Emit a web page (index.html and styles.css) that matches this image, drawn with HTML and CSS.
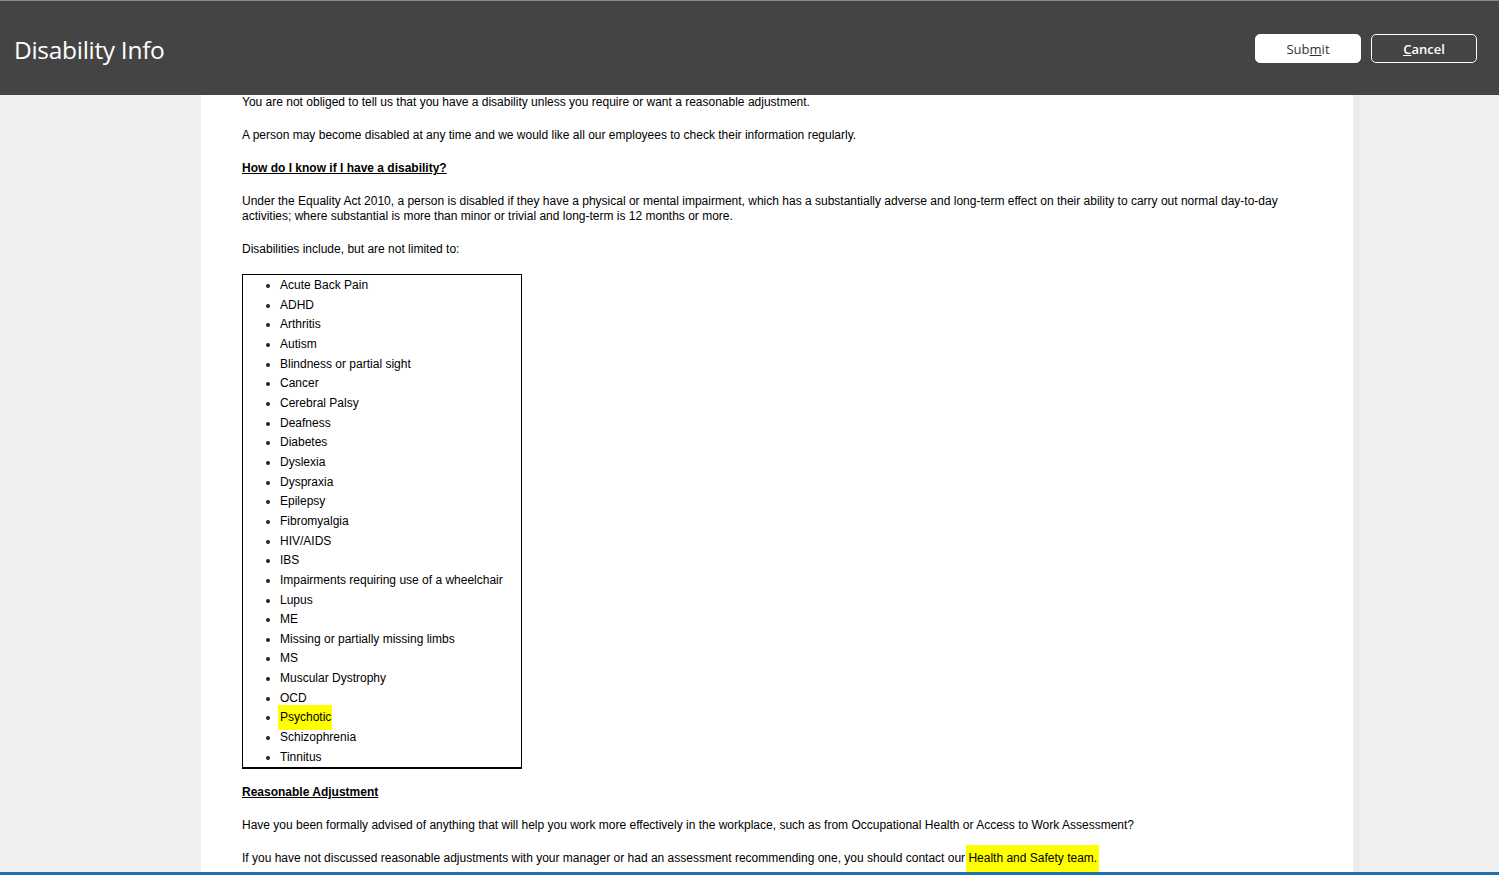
FILE: index.html
```html
<!DOCTYPE html>
<html>
<head>
<meta charset="utf-8">
<title>Disability Info</title>
<link rel="stylesheet" href="styles.css">
</head>
<body>
<div class="page">
  <header class="topbar">
    <h1 class="title">Disability Info</h1>
    <div class="actions">
      <button class="btn btn-primary">Sub<u>m</u>it</button>
      <button class="btn btn-outline"><u>C</u>ancel</button>
    </div>
  </header>
  <main class="stage">
    <section class="panel">
      <p>You are not obliged to tell us that you have a disability unless you require or want a reasonable adjustment.</p>
      <p>A person may become disabled at any time and we would like all our employees to check their information regularly.</p>
      <p class="heading">How do I know if I have a disability?</p>
      <p>Under the Equality Act 2010, a person is disabled if they have a physical or mental impairment, which has a substantially adverse and long-term effect on their ability to carry out normal day-to-day activities; where substantial is more than minor or trivial and long-term is 12 months or more.</p>
      <p>Disabilities include, but are not limited to:</p>
      <div class="listbox">
        <ul>
          <li>Acute Back Pain</li>
          <li>ADHD</li>
          <li>Arthritis</li>
          <li>Autism</li>
          <li>Blindness or partial sight</li>
          <li>Cancer</li>
          <li>Cerebral Palsy</li>
          <li>Deafness</li>
          <li>Diabetes</li>
          <li>Dyslexia</li>
          <li>Dyspraxia</li>
          <li>Epilepsy</li>
          <li>Fibromyalgia</li>
          <li>HIV/AIDS</li>
          <li>IBS</li>
          <li>Impairments requiring use of a wheelchair</li>
          <li>Lupus</li>
          <li>ME</li>
          <li>Missing or partially missing limbs</li>
          <li>MS</li>
          <li>Muscular Dystrophy</li>
          <li>OCD</li>
          <li><span class="hl hl-item">Psychotic</span></li>
          <li>Schizophrenia</li>
          <li>Tinnitus</li>
        </ul>
      </div>
      <p class="heading">Reasonable Adjustment</p>
      <p>Have you been formally advised of anything that will help you work more effectively in the workplace, such as from Occupational Health or Access to Work Assessment?</p>
      <p>If you have not discussed reasonable adjustments with your manager or had an assessment recommending one, you should contact our <span class="hl hl-text">Health and Safety team.</span></p>
    </section>
    <div class="gutter"></div>
  </main>
  <div class="bottomline"></div>
</div>
</body>
</html>
```

FILE: styles.css
```css
html, body {
  margin: 0;
  padding: 0;
  height: 875px;
  overflow: hidden;
  background: #f0f0f0;
}

.page {
  height: 875px;
  display: flex;
  flex-direction: column;
  overflow: hidden;
}

.topbar {
  flex: 0 0 95px;
  box-sizing: border-box;
  height: 95px;
  background: #444444;
  border-top: 1px solid #8a8a8a;
  display: flex;
  align-items: center;
  justify-content: space-between;
  padding: 3px 22px 0 14px;
}

.title {
  margin: 0;
  font-family: "Open Sans", "Noto Sans", sans-serif;
  font-weight: 400;
  font-size: 24.5px;
  color: #ffffff;
  letter-spacing: -0.3px;
}

.actions {
  display: flex;
  gap: 10px;
  padding-bottom: 2px;
}

.btn {
  width: 106px;
  height: 29px;
  box-sizing: border-box;
  border-radius: 5px;
  font-family: "Open Sans", "Noto Sans", sans-serif;
  font-size: 13px;
  padding: 0;
  cursor: pointer;
}

.btn-primary {
  background: #ffffff;
  border: 1px solid #ffffff;
  color: #333333;
}

.btn-outline {
  background: transparent;
  border: 1px solid #ffffff;
  color: #ffffff;
  font-weight: 600;
}

.stage {
  flex: 1;
  display: flex;
  padding-left: 201px;
  overflow: hidden;
}

.panel {
  width: 1152px;
  box-sizing: border-box;
  background: #ffffff;
  padding: 0 41px;
  font-family: "Liberation Sans", Arial, sans-serif;
  font-size: 12px;
  line-height: 15px;
  color: #000000;
}

.panel p {
  margin: 0 0 18px 0;
}

.gutter {
  width: 7px;
  background: #ebebeb;
}

.heading {
  font-weight: bold;
  text-decoration: underline;
}

.listbox {
  width: 280px;
  box-sizing: border-box;
  border: 1px solid #000000;
  border-bottom-width: 2px;
  margin-top: -1px;
  margin-bottom: 16px;
}

.listbox ul {
  margin: 0;
  padding: 1px 0 0 37px;
}

.listbox li {
  height: 19.67px;
  line-height: 19.67px;
}

.listbox li::marker {
  color: #222222;
}

.hl {
  background: #ffff00;
}

.hl-item {
  padding: 5px 1px 6px 2px;
  margin-left: -2px;
}

.hl-text {
  padding: 6px 2px 7px 2px;
  margin-left: -2px;
}

.bottomline {
  height: 3px;
  background: #1e6fb3;
  flex: 0 0 3px;
}
```
